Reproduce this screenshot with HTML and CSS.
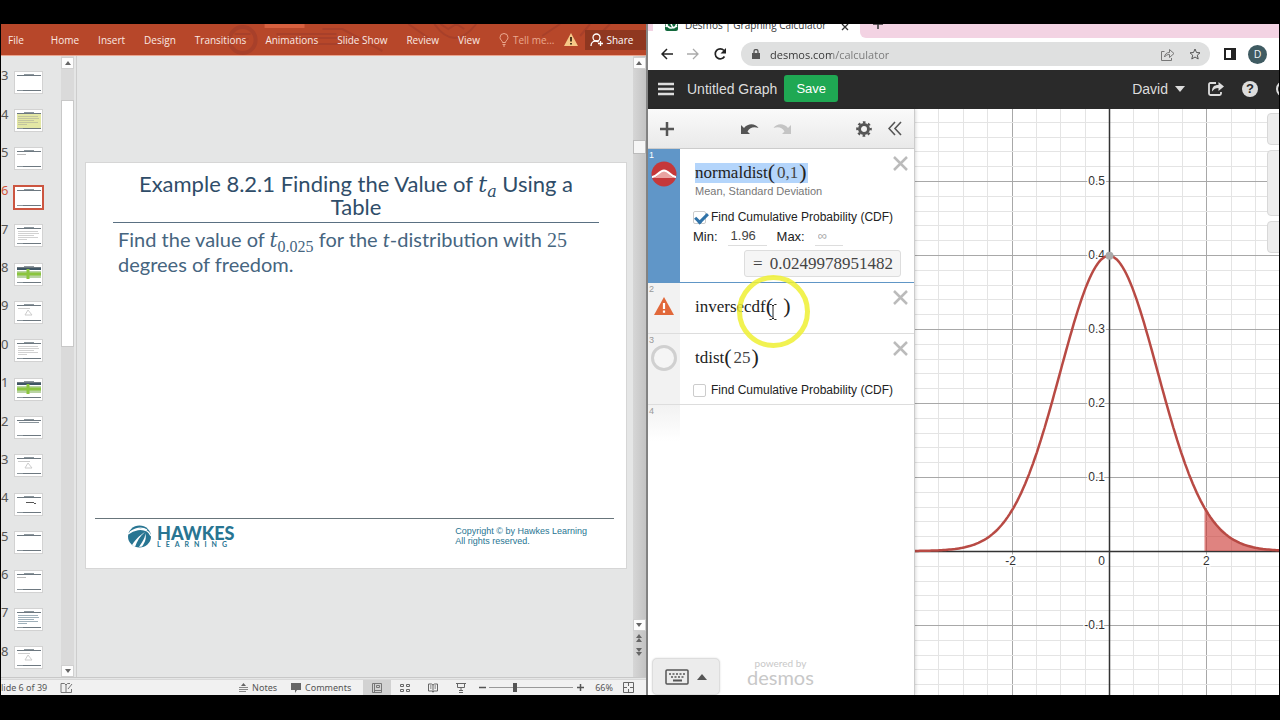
FILE: index.html
```html
<!DOCTYPE html>
<html lang="en">
<head>
  <meta charset="UTF-8" />
  <meta name="viewport" content="width=device-width, initial-scale=1.0" />
  <title>Desmos | Graphing Calculator</title>
  <link rel="stylesheet" href="styles.css">
  <script src="script.js" defer></script>
</head>
<body>
  <!-- Presentation window -->
  <section class="ppt">
    <nav class="ribbon">
      <svg class="ribbon-art" viewBox="0 0 646 31" preserveAspectRatio="none">
        <g fill="none" stroke="#a8402a" stroke-width="2">
          <circle cx="242" cy="16" r="13" stroke-width="4" />
          <path d="M234 10h16M236 15h12M276 10h60M290 14h70M310 20h50M322 5h20l40 22M408 0l26 18M434 0q20 28 42 0M440 0l8 5 8-5 8 5M560 0l-18 12M590 0l-10 12M610 0l-8 8" />
        </g>
        <path fill="#d6603f" d="M264 0h40v4h-40z" />
      </svg>
      <a class="tab-file" href="#">File</a>
      <a href="#">Home</a>
      <a href="#">Insert</a>
      <a href="#">Design</a>
      <a href="#">Transitions</a>
      <a href="#">Animations</a>
      <a href="#">Slide Show</a>
      <a href="#">Review</a>
      <a href="#">View</a>
      <a class="tell-me" href="#">
        <svg width="10" height="14" viewBox="0 0 10 14" fill="none" stroke="#eba98f"><path d="M3.500 9.500C3.500 7.500 1 7 1 4.500a4 4 0 0 1 8 0C9 7 6.500 7.500 6.500 9.500zM3.500 11.500h3M4 13h2" /></svg>
        Tell me...
      </a>
      <svg class="ribbon-warn" width="14" height="13" viewBox="0 0 14 13"><path fill="#f6c887" d="M7 0l7 13H0z" /><path stroke="#4d3a20" stroke-width="2" d="M7 4v4.500M7 10v1.500" /></svg>
      <button class="share">
        <svg width="14" height="14" viewBox="0 0 14 14" fill="none" stroke="#fff" stroke-width="1.300"><circle cx="6.500" cy="4.500" r="3.500" /><path d="M1 13c0-3 2-5 4.500-5 1.500 0 2.500.5 3 1M10.500 8v5M8 10.500h5" /></svg>
        Share
      </button>
    </nav>

    <div class="workspace">
      <aside class="slides">
        <ol class="thumbs" id="thumbs"></ol>
        <div class="scrollbar">
          <button class="scroll-btn" aria-label="Scroll up"><svg width="6" height="4" viewBox="0 0 6 4"><path d="M3 0l3 4H0z" /></svg></button>
          <div class="scroll-space"></div>
          <div class="scroll-thumb"></div>
          <div class="scroll-rest"></div>
          <button class="scroll-btn" aria-label="Scroll down"><svg width="6" height="4" viewBox="0 0 6 4"><path d="M3 4l3-4H0z" /></svg></button>
        </div>
      </aside>

      <div class="editor">
        <article class="slide">
          <h1>Example 8.2.1 Finding the Value of <span class="var">t<sub>a</sub></span> Using a Table</h1>
          <p class="slide-body">Find the value of <span class="var">t</span><sub class="num">0.025</sub> for the <i>t</i>-distribution with <span class="num">25</span> degrees of freedom.</p>
          <footer class="slide-footer">
            <div class="hawkes">
              <svg width="25" height="23" viewBox="0 0 25 23">
                <ellipse cx="12.500" cy="11.500" rx="11.500" ry="11" fill="#287592" />
                <path fill="none" stroke="#fff" stroke-width="1.300" d="M1 9C7 4 15 3 20 6c2 1 3 3 4 5M3 7c6-4 12-5 17-2" />
                <path fill="#fff" d="M18 7c-3 2-8 5-13 13l3 2c2-6 5-11 10-15zM18 8c1 3-2 8-6 14l3-.5c3-4 5-9 3-13.500z" />
              </svg>
              <div>
                <strong>HAWKES</strong>
                <small>LEARNING</small>
              </div>
            </div>
            <p class="copyright">Copyright © by Hawkes Learning<br />All rights reserved.</p>
          </footer>
        </article>
      </div>

      <div class="scrollbar scrollbar-main">
        <button class="scroll-btn" aria-label="Previous"><svg width="6" height="4" viewBox="0 0 6 4"><path d="M3 0l3 4H0z" /></svg></button>
        <div class="main-space"></div>
        <div class="main-thumb"></div>
        <div class="main-rest"></div>
        <button class="scroll-btn" aria-label="Next"><svg width="6" height="4" viewBox="0 0 6 4"><path d="M3 4l3-4H0z" /></svg></button>
        <button class="page-btn" aria-label="Previous slide"><svg width="6" height="8" viewBox="0 0 6 8"><path d="M3 0l3 4H0zM3 4l3 4H0z" /></svg></button>
        <button class="page-btn" aria-label="Next slide"><svg width="6" height="8" viewBox="0 0 6 8"><path d="M3 4l3-4H0zM3 8l3-4H0z" /></svg></button>
      </div>
    </div>

    <footer class="status">
      <span class="slide-count">lide 6 of 39</span>
      <svg width="13" height="12" viewBox="0 0 13 12" fill="none" stroke="#777"><path d="M6 10.500H1v-9h3.500L6 3v8M6 3l1.500-1.500H10M6 10.500h5.500V7M8 7l4-5" /></svg>
      <div class="status-right">
        <button><svg width="9" height="9" viewBox="0 0 9 9"><path fill="#666" d="M4.500 0L7 3H2z" /><path stroke="#888" d="M0 4.500h9M0 6.500h9M0 8.500h7" /></svg> Notes</button>
        <button class="comments"><svg width="10" height="10" viewBox="0 0 10 10"><path fill="#666" d="M0 0h10v7H6L4 10V7H0z" /></svg> Comments</button>
        <button class="view view-on" aria-label="Normal"><svg width="10" height="10" viewBox="0 0 10 10" fill="none" stroke="#777"><path d="M.5.5h9v9h-9zM2.500.5v9M4.500 2.500h3v2h-3zM2.500 7.500h7" /></svg></button>
        <button class="view" aria-label="Slide sorter"><svg width="10" height="10" viewBox="0 0 10 10" fill="none" stroke="#666"><path d="M.5 1.500h3v2h-3zM6.500 1.500h3v2h-3zM.5 6.500h3v2h-3zM6.500 6.500h3v2h-3z" /></svg></button>
        <button class="view" aria-label="Reading view"><svg width="10" height="10" viewBox="0 0 10 10" fill="none" stroke="#666"><path d="M5 2v7.500M5 2L3.500 1H.5v7H4l1 1 1-1h3.500V1h-3zM2 3h1.500M2 5h1.500M6.500 3H8M6.500 5H8" /></svg></button>
        <button class="view" aria-label="Slide show"><svg width="10" height="10" viewBox="0 0 10 10" fill="none" stroke="#666"><path d="M0 .5h10M1.500.5v4h7v-4M5 5v3M3 9.500h4M3 7.500h4" /></svg></button>
        <button class="zoom-out" aria-label="Zoom out"><svg width="7" height="7" viewBox="0 0 7 7" stroke="#555" stroke-width="1.500"><path d="M0 3.500h7" /></svg></button>
        <input class="zoom-range" type="range" min="0" max="100" value="30" aria-label="Zoom" />
        <button class="zoom-in" aria-label="Zoom in"><svg width="7" height="7" viewBox="0 0 7 7" stroke="#555" stroke-width="1.500"><path d="M0 3.500h7M3.500 0v7" /></svg></button>
        <span class="zoom-value">66%</span>
        <button aria-label="Fit slide"><svg width="11" height="11" viewBox="0 0 11 11" fill="none" stroke="#666"><path d="M.5.5h10v10H.5zM5.500 0v4M5.500 7v4M0 5.500h4M7 5.500h4" /></svg></button>
      </div>
    </footer>
  </section>

  <!-- Browser window -->
  <section class="browser">
    <div class="tabstrip">
      <div class="tab">
        <svg width="13" height="13" viewBox="0 0 13 13"><rect width="13" height="13" rx="2" fill="#12683c" /><path fill="none" stroke="#fff" stroke-width="1.500" d="M1 9c2-6 4-6 5.500-2S10 11 12 5M1 6c3 5 6 5 11 2" /></svg>
        <span>Desmos | Graphing Calculator</span>
        <button aria-label="Close tab"><svg width="8" height="8" viewBox="0 0 8 8" stroke="#333" stroke-width="1.300"><path d="M1 1l6 6M7 1L1 7" /></svg></button>
      </div>
      <div class="tab-rest">
        <button aria-label="New tab"><svg width="10" height="10" viewBox="0 0 10 10" stroke="#333" stroke-width="1.500"><path d="M5 0v10M0 5h10" /></svg></button>
      </div>
    </div>

    <div class="navbar">
      <button aria-label="Back"><svg width="12" height="12" viewBox="0 0 12 12" fill="none" stroke="#222" stroke-width="1.500"><path d="M12 6H1M6 1L1 6l5 5" /></svg></button>
      <button aria-label="Forward"><svg width="12" height="12" viewBox="0 0 12 12" fill="none" stroke="#aaa" stroke-width="1.300"><path d="M0 6h11M6 1l5 5-5 5" /></svg></button>
      <button aria-label="Reload"><svg width="14" height="14" viewBox="0 0 14 14"><path fill="none" stroke="#222" stroke-width="1.700" d="M11.500 9.500A5 5 0 1 1 11 3.500" /><path fill="#222" d="M13 1v5.500H7.500z" /></svg></button>
      <div class="omnibox">
        <svg width="8" height="10" viewBox="0 0 8 10"><path fill="#555" d="M0 4h8v6H0z" /><path fill="none" stroke="#555" stroke-width="1.300" d="M2 4V2.500a2 2 0 0 1 4 0V4" /></svg>
        <input type="text" value="desmos.com/calculator" aria-label="Address" />
        <button aria-label="Share page"><svg width="14" height="13" viewBox="0 0 14 13" fill="none" stroke="#777"><path d="M3.500 3.500h-3v9h10V10M3.500 9c.5-3 2-4.500 5-4.500v-3l4.500 4-4.500 4v-3c-2 0-3.500.5-5 2.500z" /></svg></button>
        <button aria-label="Bookmark"><svg width="12" height="12" viewBox="0 0 12 12" fill="none" stroke="#555"><path d="M6 1l1.500 3.500 3.500.3-2.700 2.400.9 3.800L6 9l-3.200 2 .9-3.800L1 4.800l3.500-.3z" /></svg></button>
      </div>
      <button class="side-panel" aria-label="Side panel"><svg width="12" height="12" viewBox="0 0 12 12"><path fill="#222" d="M0 0h12v12H0z" /><path fill="#fff" d="M2 2h5v8H2z" /></svg></button>
      <button class="avatar">D</button>
    </div>

    <header class="desmos-header">
      <button aria-label="Menu"><svg width="16" height="14" viewBox="0 0 16 14" stroke="#ddd" stroke-width="2.500"><path d="M0 2h16M0 7h16M0 12h16" /></svg></button>
      <span class="graph-title">Untitled Graph</span>
      <button class="btn-save">Save</button>
      <button class="account">David <svg width="10" height="6" viewBox="0 0 10 6"><path fill="#ddd" d="M0 0h10L5 6z" /></svg></button>
      <button class="export" aria-label="Share graph"><svg width="16" height="14" viewBox="0 0 16 14"><path fill="none" stroke="#ddd" stroke-width="1.800" d="M8 1H2.500Q1 1 1 2.500v9Q1 13 2.500 13h9q1.500 0 1.500-1.500V10" /><path fill="#ddd" d="M4 9.500C4 5 6 3 10.500 3V0L16 4.500 10.500 9V6C7.500 6 6 7 4 9.500z" /></svg></button>
      <button class="help">?</button>
      <button class="language" aria-label="Language"></button>
    </header>

    <main class="calculator">
      <div class="expressions">
        <div class="toolbar">
          <button aria-label="Add"><svg width="14" height="14" viewBox="0 0 14 14" stroke="#555" stroke-width="2.500"><path d="M7 0v14M0 7h14" /></svg></button>
          <button class="undo" aria-label="Undo"><svg width="18" height="11" viewBox="0 0 18 11"><path fill="#555" d="M0 2v9h9L6.500 8.500C9 4.500 12.500 3.500 17.500 5 14 0 7 0 3 5z" /></svg></button>
          <button class="redo" aria-label="Redo"><svg width="18" height="11" viewBox="0 0 18 11"><path fill="#c4c4c4" d="M18 2v9H9l2.500-2.500C9 4.500 5.500 3.500.5 5 4 0 11 0 15 5z" /></svg></button>
          <button class="settings" aria-label="Settings"><svg width="16" height="16" viewBox="0 0 16 16" fill="none" stroke="#555"><circle cx="8" cy="8" r="4.500" stroke-width="3" /><circle cx="8" cy="8" r="6.700" stroke-width="2.200" stroke-dasharray="2.630 2.630" stroke-dashoffset="1.300" /></svg></button>
          <button class="collapse" aria-label="Hide list"><svg width="14" height="15" viewBox="0 0 14 15" fill="none" stroke="#555" stroke-width="1.600"><path d="M7 1L1 7.500 7 14M13 1L7 7.500 13 14" /></svg></button>
        </div>

        <div class="expr expr-active">
          <div class="gutter">
            <span>1</span>
            <svg width="26" height="26" viewBox="0 0 26 26"><circle cx="13" cy="13" r="12.500" fill="#c5383a" /><path fill="#e9a3a1" d="M2 17c5 0 6-8 11-8s6 8 11 8z" /><path fill="none" stroke="#fff" stroke-width="2" d="M1 16c5 0 7-6.500 12-6.500s7 6.500 12 6.500" /></svg>
          </div>
          <div class="expr-body">
            <div class="math"><mark>normaldist<b>(</b><em>0,1</em><b>)</b></mark></div>
            <div class="hint">Mean, Standard Deviation</div>
            <div class="check-row"><input type="checkbox" id="cdf1" checked /><label for="cdf1">Find Cumulative Probability (CDF)</label></div>
            <div class="bounds">
              <label for="min">Min:</label>
              <input type="text" id="min" value="1.96" />
              <label for="max">Max:</label>
              <input class="bound-max" type="text" id="max" placeholder="∞" />
            </div>
            <output class="result"><span>=</span> 0.0249978951482</output>
          </div>
          <button class="delete" aria-label="Delete"><svg width="15" height="15" viewBox="0 0 15 15"><path d="M1 1l13 13M14 1L1 14" /></svg></button>
        </div>

        <div class="expr">
          <div class="gutter">
            <span>2</span>
            <svg width="20" height="18" viewBox="0 0 20 18"><path fill="#e1683a" d="M10 0l10 18H0z" /><path stroke="#fff" stroke-width="2.200" d="M10 6v6M10 13.500v2.200" /></svg>
          </div>
          <div class="expr-body">
            <div class="math">inversecdf<b>(</b><i class="slot"></i><b>)</b></div>
          </div>
          <button class="delete" aria-label="Delete"><svg width="15" height="15" viewBox="0 0 15 15"><path d="M1 1l13 13M14 1L1 14" /></svg></button>
          <!-- pointer highlight -->
          <div class="pointer">
            <svg width="8" height="16" viewBox="0 0 8 16" fill="none" stroke="#222"><path d="M.5.5h2L4 2 5.500.5h2M4 2v12M.5 15.500h2L4 14l1.500 1.500h2" /></svg>
          </div>
        </div>

        <div class="expr">
          <div class="gutter">
            <span>3</span>
            <i class="hidden-plot"></i>
          </div>
          <div class="expr-body">
            <div class="math">tdist<b>(</b><em>25</em><b>)</b></div>
            <div class="check-row check-late"><input type="checkbox" id="cdf3" /><label for="cdf3">Find Cumulative Probability (CDF)</label></div>
          </div>
          <button class="delete" aria-label="Delete"><svg width="15" height="15" viewBox="0 0 15 15"><path d="M1 1l13 13M14 1L1 14" /></svg></button>
        </div>

        <div class="expr expr-next">
          <div class="gutter"><span>4</span></div>
        </div>

        <div class="list-footer">
          <button class="keypad" aria-label="Keypad">
            <svg width="24" height="16" viewBox="0 0 24 16" fill="none" stroke="#555"><rect x="1" y="1" width="22" height="14" rx="1" stroke-width="1.500" /><path stroke-width="1.500" stroke-dasharray="2 1.500" d="M4 5h16M6 8h13" /><path stroke-width="2" d="M8 11.500h9" /></svg>
            <svg width="10" height="6" viewBox="0 0 10 6"><path fill="#555" d="M5 0l5 6H0z" /></svg>
          </button>
          <div class="powered"><span>powered by</span>desmos</div>
        </div>
      </div>

      <div class="graph">
        <svg id="plot"></svg>
        <div class="graph-tools">
          <button aria-label="Graph settings"></button>
          <button class="tall" aria-label="Zoom graph"></button>
          <button aria-label="Home"></button>
        </div>
      </div>
    </main>
  </section>
</body>
</html>
```

FILE: styles.css
```css
* {
  box-sizing: border-box;
  margin: 0;
  padding: 0;
}

body {
  display: flex;
  height: 100vh;
  padding: 24px 1px 25px;
  overflow: hidden;
  background: #000;
  font-family: "Liberation Sans", sans-serif;
}

button {
  border: none;
  background: none;
  font: inherit;
  color: inherit;
  display: flex;
  align-items: center;
  justify-content: center;
  flex-shrink: 0;
}

svg {
  display: block;
  flex-shrink: 0;
}

a {
  color: inherit;
  text-decoration: none;
}

/* ---------- presentation ---------- */
.ppt {
  flex: 646;
  min-width: 0;
  display: flex;
  flex-direction: column;
  background: #e5e6e6;
  border-right: 2px solid #858585;
  font-family: "Noto Sans", "Open Sans", sans-serif;
}

.ribbon {
  position: relative;
  display: flex;
  align-items: center;
  gap: 19px;
  height: 32px;
  padding-left: 7px;
  background: #b7472a;
  border-bottom: 1px solid #eba58f;
  color: #fbe9e3;
  font-family: "Open Sans", sans-serif;
  font-size: 10px;
  white-space: nowrap;
}

.ribbon a {
  position: relative;
}

.ribbon .tab-file {
  margin-right: 8px;
}

.ribbon-art {
  position: absolute;
  left: 0;
  top: 0;
  width: 100%;
  height: 100%;
}

.ribbon .tell-me {
  display: flex;
  gap: 4px;
  color: #eba98f;
}

.ribbon-warn {
  position: relative;
  margin-left: -10px;
}

.share {
  position: relative;
  flex: 1;
  justify-content: flex-start;
  gap: 3px;
  height: 20px;
  margin-left: -12px;
  padding-left: 5px;
  background: #8f3720;
  color: #fff;
}

.workspace {
  flex: 1;
  min-height: 0;
  display: flex;
  border-bottom: 1px solid #c8c8c8;
}

.slides {
  width: 76px;
  display: flex;
  border-right: 1px solid #cdcdcd;
}

.thumbs {
  flex: 1;
  display: flex;
  flex-direction: column;
  padding-top: 7px;
  list-style: none;
}

.thumbs li {
  flex: 1;
  display: flex;
  align-items: center;
  gap: 7px;
  color: #555;
  font-size: 13px;
}

.thumbs li span {
  width: 7px;
  height: 32px;
}

.thumbs li svg {
  background: #fff;
  outline: 1px solid #d2d2d2;
}

.thumbs .current {
  color: #d0563c;
}

.thumbs .current svg {
  outline: 2px solid #cc5540;
}

.scrollbar {
  width: 13px;
  margin-right: 2px;
  padding-top: 1px;
  display: flex;
  flex-direction: column;
  background: #dadada;
}

.scroll-btn {
  height: 12px;
  background: #fdfdfd;
  border: 1px solid #d0d0d0;
}

.scrollbar path {
  fill: #666;
}

.scroll-space {
  flex: 31;
}

.scroll-thumb {
  flex: 246;
  background: #fff;
  border: 1px solid #c8c8c8;
}

.scroll-rest {
  flex: 320;
}

.scrollbar-main {
  background: linear-gradient(90deg, #d6d6d6, #c3c3c3);
  margin-right: 0;
}

.main-space {
  flex: 71;
}

.main-thumb {
  height: 14px;
  background: #f6f6f6;
  border: 1px solid #bbb;
}

.main-rest {
  flex: 463;
}

.page-btn {
  height: 14px;
}

.scrollbar-main .page-btn:last-child {
  margin-bottom: 18px;
}

.editor {
  flex: 1;
  min-width: 0;
  display: flex;
  align-items: center;
  padding: 0 7px 2px 9px;
}

.slide {
  width: 100%;
  aspect-ratio: 4 / 3;
  display: flex;
  flex-direction: column;
  padding: 9px 12px 0 9px;
  background: #fff;
  outline: 1px solid #d6d6d6;
  font-family: Lato, sans-serif;
  color: #46657f;
}

.slide h1 {
  margin: 0 15px 0 18px;
  padding: 0 20px 4px;
  border-bottom: 1px solid #5a7082;
  font-size: 22px;
  font-weight: 400;
  line-height: 23px;
  text-align: center;
  color: #2f4d69;
}

.slide sub {
  font-size: 16px;
  line-height: 0;
}

.slide .var {
  font-family: "DejaVu Serif", "Liberation Serif", serif;
  font-style: italic;
  line-height: 0;
}

.slide .num {
  font-family: "Liberation Serif", serif;
  line-height: 0;
}

.slide-body {
  margin: 4px 23px 0;
  font-size: 20px;
  line-height: 25px;
}

.slide-footer {
  margin-top: auto;
  height: 50px;
  display: flex;
  align-items: flex-start;
  justify-content: space-between;
  padding: 6px 27px 0 32px;
  border-top: 1px solid #68757b;
  color: #287592;
}

.hawkes {
  display: flex;
  gap: 5px;
}

.hawkes strong,
.hawkes small {
  display: block;
}

.hawkes strong {
  font-size: 18px;
  font-weight: 900;
  line-height: 16px;
}

.hawkes small {
  font-size: 7px;
  font-weight: 700;
  line-height: 7px;
  letter-spacing: 5px;
}

.copyright {
  font: 9px/10px "Liberation Sans", sans-serif;
  padding-top: 1px;
}

.status {
  height: 16px;
  margin-top: 1px;
  display: flex;
  align-items: center;
  gap: 13px;
  background: #f1f1f1;
  border-top: 1px solid #d8d8d8;
  color: #555;
  font-size: 9px;
  white-space: nowrap;
}

.status-right {
  margin-left: auto;
  display: flex;
  align-items: center;
  height: 100%;
  padding-right: 12px;
}

.status button {
  gap: 4px;
}

.status .comments {
  margin: 0 12px 0 14px;
}

.status .view {
  width: 28px;
  height: 100%;
}

.status .view-on {
  background: #d2d2d2;
}

.status .zoom-out,
.status .zoom-in {
  width: 14px;
}

.zoom-range {
  appearance: none;
  width: 84px;
  height: 12px;
  background: linear-gradient(#999, #999) center / 100% 1px no-repeat;
}

.zoom-range::-webkit-slider-thumb {
  appearance: none;
  width: 4px;
  height: 9px;
  background: #555;
}

.zoom-value {
  margin: 0 10px 0 8px;
}

/* ---------- browser ---------- */
.browser {
  flex: 632;
  min-width: 0;
  display: flex;
  flex-direction: column;
  background: #fff;
}

.tabstrip {
  height: 14px;
  display: flex;
  overflow: hidden;
  background: #fff;
  font: 10px/12px "Open Sans", sans-serif;
  color: #333;
}

.tab {
  width: 212px;
  display: flex;
  align-items: flex-end;
  gap: 7px;
  height: 7px;
  padding-left: 12px;
  white-space: nowrap;
  border-left: 5px solid #f3d3e3;
}

.tab span {
  flex: 1;
}

.tab button {
  margin-right: 11px;
}

.tab-rest {
  flex: 1;
  background: #f3d3e3;
  border-bottom-left-radius: 6px;
  padding-left: 13px;
}

.tab-rest button {
  height: 0;
}

.navbar {
  height: 32px;
  display: flex;
  align-items: center;
  gap: 14px;
  padding: 0 12px 0 13px;
}

.omnibox {
  flex: 1;
  display: flex;
  align-items: center;
  gap: 10px;
  height: 24px;
  padding: 0 9px 0 11px;
  border-radius: 12px;
  background: #dfe0e0;
}

.omnibox input {
  flex: 1;
  min-width: 0;
  border: none;
  font: 11px "Open Sans", sans-serif;
  background: linear-gradient(90deg, #333 62px, #777 62px);
  background-clip: text;
  -webkit-background-clip: text;
  color: transparent;
}

.omnibox button {
  margin-left: 4px;
}

.avatar {
  width: 19px;
  height: 19px;
  margin-left: -2px;
  border-radius: 50%;
  background: #3f5b62;
  color: #eef4f4;
  font-size: 10px;
}

.desmos-header {
  display: flex;
  align-items: center;
  height: 39px;
  padding: 0 0 2px 10px;
  background: #2a2a2a;
  color: #ddd;
  font-size: 14px;
  overflow: hidden;
}

.graph-title {
  margin: 0 7px 0 13px;
  white-space: nowrap;
}

.btn-save {
  width: 54px;
  height: 27px;
  border-radius: 3px;
  background: #1fa853;
  color: #fff;
  font-size: 13px;
}

.account {
  margin-left: auto;
  gap: 7px;
}

.export {
  margin: 0 18px 0 23px;
}

.help {
  width: 16px;
  height: 16px;
  border-radius: 50%;
  background: #ddd;
  color: #2a2a2a;
  font-size: 13px;
  font-weight: bold;
}

.language {
  width: 16px;
  height: 16px;
  margin: 0 -13px 0 18px;
  border: 2px solid #ddd;
  border-radius: 50%;
}

.calculator {
  flex: 1;
  min-height: 0;
  display: flex;
}

.expressions {
  position: relative;
  width: 267px;
  display: flex;
  flex-direction: column;
  border-right: 1px solid #ccc;
  box-shadow: 1px 0 3px rgba(0, 0, 0, 0.15);
  z-index: 1;
}

.toolbar {
  display: flex;
  align-items: center;
  height: 40px;
  padding: 0 12px;
  background: linear-gradient(#fafafa, #e9e9e9);
  border-bottom: 1px solid #ccc;
}

.undo {
  margin-left: 67px;
}

.redo {
  margin-left: 14px;
}

.settings {
  margin: 0 16px 0 auto;
}

.expr {
  position: relative;
  display: flex;
  min-height: 51px;
  border-bottom: 1px solid #ddd;
}

.gutter {
  width: 32px;
  display: flex;
  flex-direction: column;
  align-items: center;
  background: #f2f2f2;
}

.gutter span {
  align-self: flex-start;
  padding-left: 1px;
  font-size: 9px;
  line-height: 12px;
  color: #999;
}

.expr-active {
  border-color: #6096c6;
}

.expr-active .gutter {
  background: #6096c8;
}

.expr-active .gutter span {
  color: #fff;
}

.expr .gutter svg {
  margin-top: 2px;
}

.expr .hidden-plot {
  margin-top: -1px;
}

.expr-active .gutter svg {
  margin-top: 0;
}

.expr-body {
  flex: 1;
  padding: 8px 13px 5px 15px;
}

.math {
  display: flex;
  align-items: center;
  height: 32px;
  font-family: "Liberation Serif", serif;
  font-size: 17px;
  color: #222;
}

.math mark {
  display: flex;
  align-items: center;
  height: 20px;
  background: #b4d5fb;
  color: inherit;
}

.math b {
  padding: 0 1px 3px 0;
  font-size: 22px;
  font-weight: 400;
  line-height: 20px;
}

.math em {
  font-style: normal;
  color: #444;
  padding: 0 1px;
}

.slot {
  width: 9px;
}

.hint {
  font-size: 11px;
  line-height: 12px;
  margin-top: -4px;
  color: #777;
}

.check-row {
  display: flex;
  align-items: center;
  gap: 5px;
  height: 14px;
  margin: 13px 0 0 -2px;
  font-size: 12px;
  color: #222;
  white-space: nowrap;
}

.check-late {
  margin-top: 9px;
  margin-bottom: 2px;
}

.check-row input {
  appearance: none;
  width: 13px;
  height: 13px;
  border: 1px solid #ccc;
  border-radius: 2px;
  background: #fff;
}

.check-row input:checked::after {
  content: "";
  display: block;
  width: 10px;
  height: 5px;
  margin: 1px;
  border: solid #2f72a8;
  border-width: 0 0 3px 3px;
  transform: rotate(-45deg);
}

.bounds {
  display: flex;
  align-items: center;
  height: 22px;
  margin: 1px 0 0 -2px;
  font-size: 13px;
  color: #222;
}

.bounds input {
  width: 39px;
  height: 20px;
  margin: 0 10px 0 10px;
  padding-left: 3px;
  border: none;
  border-bottom: 1px solid #ddd;
  background: none;
  font-family: inherit;
  font-size: 13px;
  color: #444;
}

.bounds .bound-max {
  width: 28px;
}

.bounds input::placeholder {
  color: #aaa;
}

.result {
  display: block;
  width: max-content;
  height: 27px;
  margin: 3px 0 0 auto;
  padding: 0 7px 0 8px;
  border: 1px solid #ddd;
  border-radius: 3px;
  background: #f5f5f5;
  font-family: "Liberation Serif", serif;
  font-size: 17px;
  line-height: 25px;
  color: #444;
}

.result span {
  margin-right: 3px;
}

.delete {
  position: absolute;
  top: 7px;
  right: 6px;
}

.delete path {
  stroke: #bbb;
  stroke-width: 2.5;
}

.hidden-plot {
  width: 26px;
  height: 26px;
  border: 3px solid #d0d0d0;
  border-radius: 50%;
  background: #f5f5f5;
}

.expr-next {
  min-height: 36px;
  border-bottom: none;
}

.expr-next .gutter {
  background: linear-gradient(#f2f2f2, #fff);
}

.pointer {
  position: absolute;
  left: 89px;
  top: -8px;
  width: 73px;
  height: 73px;
  display: flex;
  align-items: center;
  justify-content: center;
  border: 5px solid rgba(238, 240, 50, 0.85);
  border-radius: 50%;
  z-index: 2;
}

.list-footer {
  margin-top: auto;
  display: flex;
  align-items: flex-start;
  gap: 27px;
  padding-left: 4px;
}

.keypad {
  gap: 8px;
  width: 68px;
  height: 37px;
  border: 1px solid #ddd;
  border-radius: 5px;
  background: #ececec;
  box-shadow: 0 0 2px rgba(0, 0, 0, 0.15);
}

.powered {
  font: 20px/16px Lato, sans-serif;
  color: #c8c8c8;
  text-align: center;
}

.powered span {
  display: block;
  font-size: 10px;
  line-height: 11px;
}

.graph {
  position: relative;
  flex: 1;
  min-width: 0;
  overflow: hidden;
}

#plot {
  width: 100%;
  height: 100%;
  font-size: 12px;
}

.graph-tools {
  position: absolute;
  top: 4px;
  right: -20px;
  display: flex;
  flex-direction: column;
  gap: 5px;
}

.graph-tools button {
  width: 32px;
  height: 32px;
  border: 1px solid #d8d8d8;
  border-radius: 4px;
  background: #ededed;
}

.graph-tools .tall {
  height: 66px;
}
```

FILE: script.js
```javascript
const NS = 'http://www.w3.org/2000/svg';

function add(parent, tag, attrs, text) {
  const el = document.createElementNS(NS, tag);
  for (const key in attrs) el.setAttribute(key, attrs[key]);
  if (text) el.textContent = text;
  parent.appendChild(el);
  return el;
}

// Slide thumbnails: [number, kind]
const slides = [
  ['3', 'blank'], ['4', 'yellow'], ['5', 'line'], ['6', 'current'], ['7', 'text'],
  ['8', 'green'], ['9', 'chart'], ['0', 'text'], ['1', 'green'], ['2', 'title'],
  ['3', 'chart'], ['4', 'note'], ['5', 'blank'], ['6', 'line'], ['7', 'dense'], ['8', 'chart']
];

function drawThumbs() {
  const list = document.getElementById('thumbs');
  slides.forEach(([num, kind]) => {
    const li = document.createElement('li');
    const label = document.createElement('span');
    label.textContent = num;
    li.appendChild(label);
    if (kind === 'current') li.className = 'current';
    const svg = add(li, 'svg', { width: 27, height: 21, viewBox: '0 0 27 21' });
    if (kind === 'yellow') add(svg, 'rect', { x: 2, y: 3, width: 24, height: 15, fill: '#e3e7a4' });
    if (kind === 'green') {
      add(svg, 'rect', { x: 2, y: 3, width: 24, height: 3, fill: '#3f5664' });
      add(svg, 'rect', { x: 2, y: 7, width: 24, height: 7, fill: '#b9d3a4' });
      add(svg, 'path', { d: 'M2 10h24M13 5v10', stroke: '#8bc53f', 'stroke-width': 3 });
    }
    add(svg, 'path', { d: 'M2 3.500h24M2 18.500h24', stroke: '#6d7880' });
    add(svg, 'path', { d: 'M9 2.500h10M2 18.500h6', stroke: '#8d979d' });
    if (kind === 'line') add(svg, 'path', { d: 'M2 6.500h9', stroke: '#bbb' });
    if (kind === 'title') add(svg, 'path', { d: 'M4 5.500h20', stroke: '#8a949b' });
    if (kind === 'note') add(svg, 'path', { d: 'M11 8.500h8M19 9.500h2', stroke: '#555' });
    if (kind === 'chart') add(svg, 'path', { d: 'M3 6.500h12M10 13l3-5 4 5z', stroke: '#ccc', fill: 'none' });
    if (kind === 'text' || kind === 'yellow' || kind === 'dense') {
      add(svg, 'path', { d: 'M3 6.500h20M3 8.500h21M3 10.500h16M3 12.500h20M3 14.500h9', stroke: kind === 'dense' ? '#9fb0ba' : '#999', 'stroke-opacity': kind === 'dense' ? 1 : 0.45 });
    }
    list.appendChild(li);
  });
}

// Normal curve with the upper tail shaded from 1.96
function drawPlot() {
  const plot = document.getElementById('plot');
  const w = plot.clientWidth;
  const h = plot.clientHeight;
  const ox = Math.round(w * 0.532);
  const oy = Math.round(h * 0.754);
  const ux = w / 7.47;
  const uy = 740;
  const pdf = x => Math.exp(-x * x / 2) / Math.sqrt(2 * Math.PI);
  plot.innerHTML = '';

  for (let i = -10; i <= 10; i++) {
    const x = Math.round(ox + i * ux / 2) + 0.5;
    add(plot, 'path', { d: `M${x} 0V${h}`, stroke: i % 4 ? '#e4e4e4' : '#a8a8a8' });
  }
  for (let i = -12; i <= 32; i++) {
    const y = Math.round(oy - i * uy / 50) + 0.5;
    add(plot, 'path', { d: `M0 ${y}H${w}`, stroke: i % 5 ? '#e4e4e4' : '#a8a8a8' });
  }
  add(plot, 'path', { d: `M${ox + 0.5} 0V${h}M0 ${oy + 0.5}H${w}`, stroke: '#333', 'stroke-width': 1.5 });

  const label = { fill: '#333', stroke: '#fff', 'stroke-width': 3, 'paint-order': 'stroke' };
  [-0.1, 0.1, 0.2, 0.3, 0.4, 0.5].forEach(v => {
    add(plot, 'text', { ...label, x: ox - 4, y: oy - v * uy + 4, 'text-anchor': 'end' }, String(v));
  });
  add(plot, 'text', { ...label, x: ox - 4, y: oy + 14, 'text-anchor': 'end' }, '0');
  add(plot, 'text', { ...label, x: ox - 2 * ux - 1, y: oy + 14, 'text-anchor': 'middle' }, '-2');
  add(plot, 'text', { ...label, x: ox + 2 * ux, y: oy + 14, 'text-anchor': 'middle' }, '2');

  let curve = '';
  let tail = `M${ox + 1.96 * ux} ${oy}`;
  for (let x = -4.2; x <= 4.2; x += 0.04) {
    const point = `${(ox + x * ux).toFixed(1)} ${(oy - pdf(x) * uy).toFixed(1)}`;
    curve += (curve ? 'L' : 'M') + point;
    if (x >= 1.95) tail += 'L' + point;
  }
  add(plot, 'path', { d: `${tail}V${oy}Z`, fill: '#c9302c', 'fill-opacity': 0.6 });
  add(plot, 'path', { d: curve, fill: 'none', stroke: '#b84a44', 'stroke-width': 2.5 });
  add(plot, 'circle', { cx: ox + 0.5, cy: oy - pdf(0) * uy, r: 4, fill: '#aaa' });
}

drawThumbs();
drawPlot();
window.addEventListener('resize', drawPlot);
```
